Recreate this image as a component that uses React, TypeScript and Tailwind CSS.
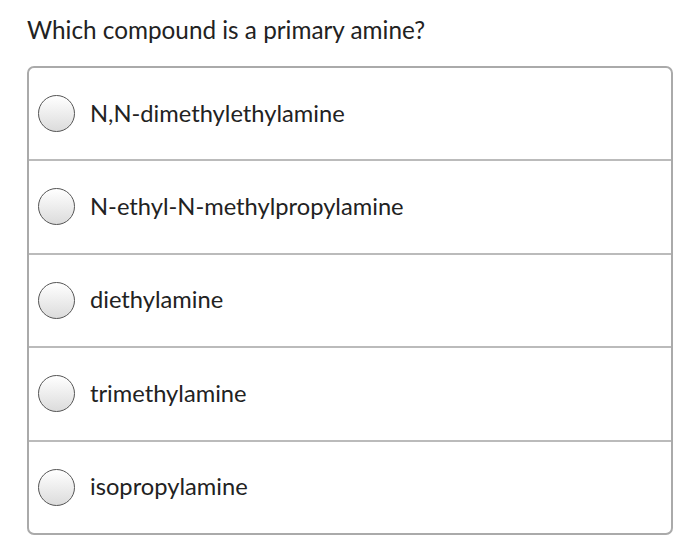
const OPTIONS = [
  'N,N-dimethylethylamine',
  'N-ethyl-N-methylpropylamine',
  'diethylamine',
  'trimethylamine',
  'isopropylamine',
];

function Radio() {
  return (
    <span className="box-border h-[37px] w-[37px] shrink-0 rounded-full border-[1.5px] border-[#555] bg-gradient-to-b from-white to-[#dcdcdc]" />
  );
}

export default function App() {
  return (
    <div
      className="h-[538px] w-[700px] bg-white pl-[27px] pr-[27px] pt-[14px] text-[#222]"
      style={{ fontFamily: 'Lato, "Open Sans", sans-serif' }}
    >
      <h1 className="text-[24.3px] leading-[32px]">Which compound is a primary amine?</h1>
      <div className="mt-[20px] overflow-hidden rounded-[7px] border-2 border-[#aaa]">
        {OPTIONS.map((opt, i) => (
          <div
            key={opt}
            className={`flex items-center gap-[15px] pl-[9px] ${i > 0 ? 'h-[93.5px] border-t-2 border-[#bbb]' : 'h-[91px]'}`}
          >
            <Radio />
            <span className="text-[23.7px]">{opt}</span>
          </div>
        ))}
      </div>
    </div>
  );
}
